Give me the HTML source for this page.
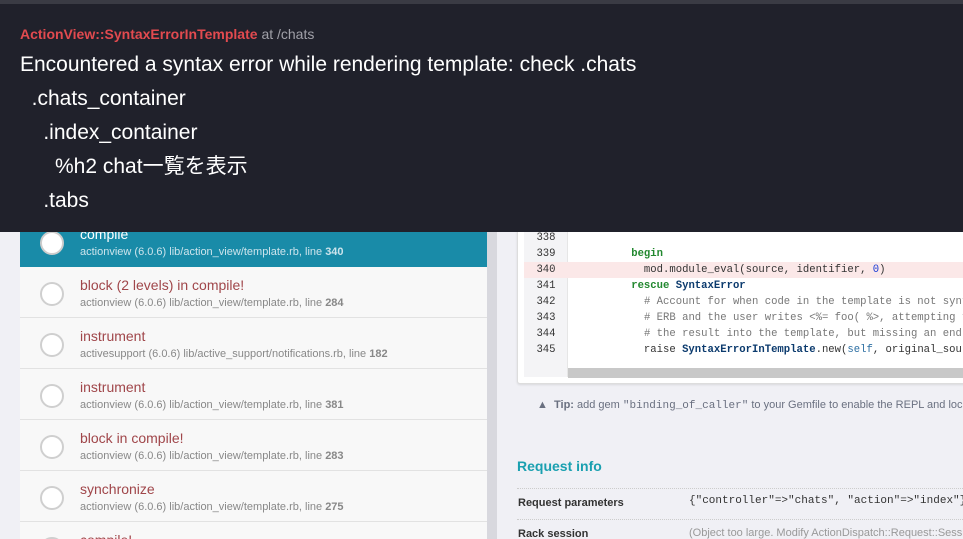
<!DOCTYPE html>
<html style="overflow:hidden;width:963px;height:539px"><head><meta charset="utf-8"><style>
*{margin:0;padding:0;box-sizing:border-box}
body{width:963px;height:539px;overflow:hidden;background:#f0f0f5;font-family:"Liberation Sans","Noto Sans CJK JP",sans-serif;position:relative}
#clip{position:absolute;left:0;top:0;width:963px;height:539px;overflow:hidden}
.left{position:absolute;left:0;top:0;width:497px;height:539px;background:#f0f0f5;border-right:1px solid #dcdce2}
.sb{position:absolute;left:487px;top:0;width:10px;height:539px;background:#d8d8de}
.list{position:absolute;left:20px;top:216px;width:467px;height:323px;overflow:hidden}
.it{height:51px;border-bottom:1px solid #e2e2e2;background:#f8f8f8;position:relative}
.it .c{position:absolute;left:20px;top:15px;width:24px;height:24px;border-radius:50%;border:2px solid #cfcfcf;background:#fff}
.it .t{position:absolute;left:60px;top:10px;font-size:14px;color:#a0464a}
.it .s{position:absolute;left:60px;top:30px;font-size:11px;color:#888}
.it .s b{color:#888}
.it.a{background:#198ba8;border-bottom:none}
.it.a .t{color:#fff}.it.a .s,.it.a .s b{color:#cde4ec}
.it.a .c{border-color:#ccc}
.hdr{position:absolute;left:0;top:0;width:963px;height:232px;background:#20212b;border-top:4px solid #3a3b44;color:#fff}
.hdr .e{position:absolute;left:20px;top:22px;font-size:14px}
.hdr .e b{color:#e24a4f}.hdr .e span{color:#a0a0a8}
.hdr .m{position:absolute;left:20px;top:44px;font-size:21px;line-height:34px;white-space:pre;color:#fff}
.code{position:absolute;left:517px;top:216px;width:460px;height:168px;background:#fff;border:1px solid #ddd;border-radius:3px;box-shadow:0 1px 2px rgba(0,0,0,.1);overflow:hidden}
.ln{position:absolute;left:6px;top:0;width:44px;height:160px;background:#f4f4f6;border-right:1px solid #e6e6e6}
.rows{position:absolute;left:6px;top:13px;width:460px;font-family:"Liberation Mono",monospace;font-size:10.6px}
.r{height:16px;line-height:16px;white-space:pre;color:#333}
.r i{font-style:normal;display:inline-block;width:50px;text-align:center;color:#333;padding-right:6px}
.r.h{background:#fbe8e8}
.g{color:#22882f;font-weight:bold}.n{color:#0c3b6e;font-weight:bold}.cm{color:#777}.num{color:#1a3cd6}.sf{color:#2d6fa3}
.scr{position:absolute;left:50px;top:151px;width:420px;height:10px;background:#c8c8c8}
.tip{position:absolute;left:537px;top:399px;font-size:11px;color:#6a7080;white-space:nowrap}
.tip b{color:#6a7080}.tip code{font-family:"Liberation Mono",monospace;font-size:11px}
h3{position:absolute;left:517px;top:458px;font-size:14px;color:#1aa0b0}
.dl{position:absolute;left:517px;width:446px;border-top:1px dotted #ccc}
.k{position:absolute;left:518px;font-size:11px;font-weight:bold;color:#333}
.v{position:absolute;left:689px;font-size:11px;color:#333;white-space:nowrap}
</style></head><body><div id="clip">
<div class="left"></div><div class="sb"></div>
<div class="list">
<div class="it a"><div class="c"></div><div class="t">compile</div><div class="s">actionview (6.0.6) lib/action_view/template.rb, line <b>340</b></div></div>
<div class="it"><div class="c"></div><div class="t">block (2 levels) in compile!</div><div class="s">actionview (6.0.6) lib/action_view/template.rb, line <b>284</b></div></div>
<div class="it"><div class="c"></div><div class="t">instrument</div><div class="s">activesupport (6.0.6) lib/active_support/notifications.rb, line <b>182</b></div></div>
<div class="it"><div class="c"></div><div class="t">instrument</div><div class="s">actionview (6.0.6) lib/action_view/template.rb, line <b>381</b></div></div>
<div class="it"><div class="c"></div><div class="t">block in compile!</div><div class="s">actionview (6.0.6) lib/action_view/template.rb, line <b>283</b></div></div>
<div class="it"><div class="c"></div><div class="t">synchronize</div><div class="s">actionview (6.0.6) lib/action_view/template.rb, line <b>275</b></div></div>
<div class="it"><div class="c"></div><div class="t">compile!</div><div class="s">actionview (6.0.6) lib/action_view/template.rb, line <b>270</b></div></div>
</div>
<div class="code"><div class="ln"></div>
<div class="rows">
<div class="r"><i>338</i></div>
<div class="r"><i>339</i>         <span class="g">begin</span></div>
<div class="r h"><i>340</i>           mod.module_eval(source, identifier, <span class="num">0</span>)</div>
<div class="r"><i>341</i>         <span class="g">rescue</span> <span class="n">SyntaxError</span></div>
<div class="r"><i>342</i>           <span class="cm"># Account for when code in the template is not syntactically valid</span></div>
<div class="r"><i>343</i>           <span class="cm"># ERB and the user writes &lt;%= foo( %&gt;, attempting to call a helper</span></div>
<div class="r"><i>344</i>           <span class="cm"># the result into the template, but missing an end parenthesis.</span></div>
<div class="r"><i>345</i>           raise <span class="n">SyntaxErrorInTemplate</span>.new(<span class="sf">self</span>, original_source)</div>
</div>
<div class="scr"></div></div>
<div class="tip">▲&nbsp; <b>Tip:</b> add gem <code>"binding_of_caller"</code> to your Gemfile to enable the REPL and local variable inspection.</div>
<h3>Request info</h3>
<div class="dl" style="top:488px"></div>
<div class="k" style="top:497px">Request parameters</div>
<div class="v" style="top:495px;font-family:'Liberation Mono',monospace">{"controller"=&gt;"chats", "action"=&gt;"index"}</div>
<div class="dl" style="top:519px"></div>
<div class="k" style="top:528px">Rack session</div>
<div class="v" style="top:527px;color:#999">(Object too large. Modify ActionDispatch::Request::Session#inspect)</div>
<div class="hdr">
<div class="e"><b>ActionView::SyntaxErrorInTemplate</b> <span>at /chats</span></div>
<div class="m">Encountered a syntax error while rendering template: check .chats
  .chats_container
    .index_container
      %h2 chat一覧を表示
    .tabs</div>
</div>
</div></body></html>
